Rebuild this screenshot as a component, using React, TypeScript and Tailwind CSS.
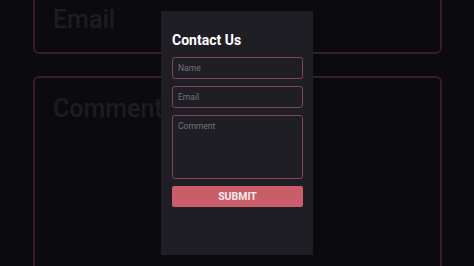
import React from "react";

export default function App() {
  return (
    <div
      className="relative w-[474px] h-[266px] overflow-hidden bg-[#0b0a0e]"
      style={{ fontFamily: "Roboto, 'Liberation Sans', sans-serif" }}
    >
      {/* blurred, zoomed background copy of the form */}
      <div className="flex flex-col gap-[22px] pl-[33px] pr-[32px] mt-[-20px]">
        <div className="h-[74px] rounded-[6px] border-2 border-[#3a1c28] pl-[18px] pt-[26px]">
          <div className="text-[25px] leading-[24px] font-medium text-[#1d1d21]">Email</div>
        </div>
        <div className="h-[250px] rounded-[6px] border-2 border-[#3a1c28] pl-[18px] pt-[19px]">
          <div className="text-[25px] leading-[24px] font-medium text-[#1d1d21]">Comment</div>
        </div>
      </div>

      {/* phone frame with the form */}
      <div className="absolute left-[161px] top-[11px] w-[152px] h-[244px] bg-[#1f1e24] pl-[11px] pr-[10px] pt-[21px] flex flex-col">
        <h1 className="text-[14px] leading-[16px] font-bold text-white mb-[9px]">Contact Us</h1>
        <div className="flex flex-col gap-[7px]">
          <input
            placeholder="Name"
            className="h-[22px] w-full rounded-[3px] border border-[#804658] bg-transparent pl-[5px] text-[8.5px] text-white placeholder:text-[#75737b] outline-none"
          />
          <input
            placeholder="Email"
            className="h-[22px] w-full rounded-[3px] border border-[#804658] bg-transparent pl-[5px] text-[8.5px] text-white placeholder:text-[#75737b] outline-none"
          />
          <textarea
            placeholder="Comment"
            className="h-[64px] w-full resize-none rounded-[3px] border border-[#804658] bg-transparent pl-[5px] pt-[5px] text-[8.5px] leading-[10px] text-white placeholder:text-[#75737b] outline-none"
          />
          <button className="h-[21px] w-full rounded-[2px] bg-[#c95d69] text-[10.5px] font-bold text-[#f4eaec] flex items-center justify-center">
            SUBMIT
          </button>
        </div>
      </div>
    </div>
  );
}
